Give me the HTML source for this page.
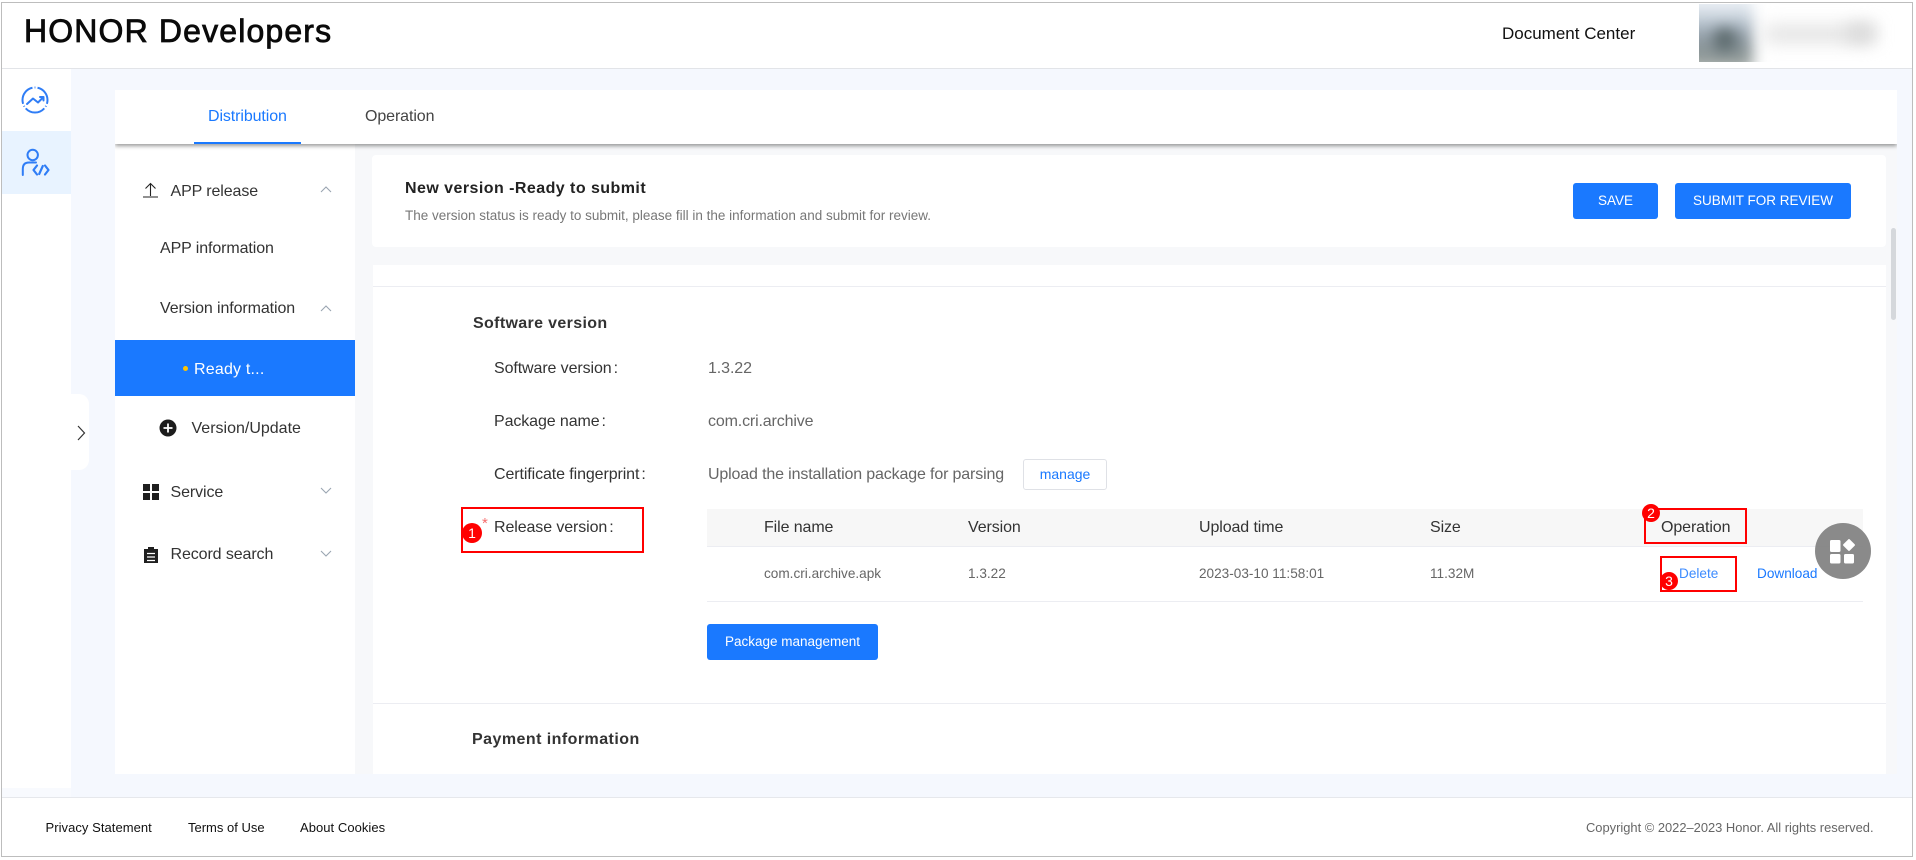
<!DOCTYPE html>
<html><head><meta charset="utf-8"><style>
html,body{margin:0;padding:0;width:1916px;height:860px;overflow:hidden;background:#fff}
body{position:relative;font-family:"Liberation Sans",sans-serif;color:#333;font-size:16px}
.a{position:absolute}
.t{position:absolute;line-height:20px;height:20px;white-space:nowrap;letter-spacing:-.1px}
.s{font-size:13.6px;letter-spacing:0}
.b{font-weight:700}
.rb{position:absolute;border:2px solid #f00;box-sizing:border-box}
.n{position:absolute;background:#f00;color:#fff;border-radius:50%;text-align:center;font-size:14px;box-sizing:border-box}
.btn{position:absolute;background:#1a79ff;color:#fff;border-radius:3px;text-align:center;font-size:13.5px}
</style></head><body>
<!-- backgrounds -->
<div class="a" style="left:71px;top:68px;width:1841px;height:729px;background:#f5f8fe"></div>
<div class="a" style="left:1px;top:788px;width:70px;height:9px;background:#f8fafe"></div>
<div class="a" style="left:1px;top:131px;width:70px;height:63px;background:#e8f3ff"></div>
<div class="a" style="left:115px;top:144px;width:1782px;height:630px;background:#f7f8fa"></div>
<div class="a" style="left:115px;top:144px;width:240px;height:630px;background:#fff"></div>
<div class="a" style="left:115px;top:90px;width:1782px;height:54px;background:#fff;box-shadow:0 2px 4px rgba(0,0,0,.4);clip-path:inset(0 0 -10px 0)"></div>
<div class="a" style="left:194px;top:142px;width:107px;height:2px;background:#1a79ff"></div>
<div class="a" style="left:372px;top:155px;width:1514px;height:92px;background:#fff;border-radius:4px"></div>
<div class="a" style="left:373px;top:265px;width:1513px;height:509px;background:#fff"></div>
<div class="a" style="left:373px;top:286px;width:1513px;height:1px;background:#ecedf2"></div>
<div class="a" style="left:373px;top:703px;width:1513px;height:1px;background:#ecedf2"></div>
<div class="a" style="left:1891px;top:228px;width:5px;height:92px;background:#d5d8dc;border-radius:3px"></div>
<div class="a" style="left:71px;top:394px;width:18px;height:76px;background:#fff;border-radius:0 10px 10px 0"></div>
<div class="a" style="left:115px;top:340px;width:240px;height:56px;background:#1a79ff"></div>
<!-- header -->
<div class="a" style="left:1px;top:68px;width:1911px;height:1px;background:#e2e4e8"></div>
<div class="t" style="left:24px;top:13px;font-size:32px;line-height:36px;height:36px;letter-spacing:1.15px;color:#0a0a0a;-webkit-text-stroke:.8px #0a0a0a">HONOR Developers</div>
<div class="t" style="left:1502px;top:24px;font-size:17px;letter-spacing:0;color:#111">Document Center</div>
<div class="a" style="left:1699px;top:4px;width:200px;height:58px;overflow:hidden;background:#fff">
<div class="a" style="left:-18px;top:-10px;width:72px;height:80px;background:linear-gradient(#f2f5f9 0%,#e2e9f0 18%,#b4c0cb 38%,#8f9ba4 55%,#8a9493 78%,#c9ccc8 100%);filter:blur(7px)"></div>
<div class="a" style="left:14px;top:24px;width:24px;height:24px;border-radius:50%;background:#5d6b6e;filter:blur(7px)"></div>
<div class="a" style="left:66px;top:22px;width:108px;height:16px;background:#e0e0e0;filter:blur(9px)"></div>
<div class="a" style="left:148px;top:20px;width:28px;height:18px;background:#dadada;filter:blur(8px)"></div>
</div>
<!-- tabs -->
<div class="t" style="left:208px;top:107px;color:#1a79ff">Distribution</div>
<div class="t" style="left:365px;top:107px;color:#444">Operation</div>
<!-- menu -->
<div class="t" style="left:170.5px;top:181.5px">APP release</div>
<div class="t" style="left:160px;top:239px">APP information</div>
<div class="t" style="left:160px;top:299px">Version information</div>
<div class="a" style="left:182.500px;top:365.500px;width:5px;height:5px;border-radius:50%;background:#ffc400"></div>
<div class="t" style="left:194px;top:360px;color:#fff;letter-spacing:.2px">Ready t...</div>
<div class="t" style="left:191.5px;top:419px;letter-spacing:0">Version/Update</div>
<div class="t" style="left:170.5px;top:483px">Service</div>
<div class="t" style="left:170.5px;top:545px">Record search</div>
<!-- head card -->
<div class="t b" style="left:405px;top:179px;color:#222;letter-spacing:.45px">New version -Ready to submit</div>
<div class="t" style="left:405px;top:206px;font-size:13.5px;letter-spacing:0;color:#777">The version status is ready to submit, please fill in the information and submit for review.</div>
<div class="btn" style="left:1573px;top:183px;width:85px;height:36px;line-height:36px">SAVE</div>
<div class="btn" style="left:1675px;top:183px;width:176px;height:36px;line-height:36px">SUBMIT FOR REVIEW</div>
<!-- form -->
<div class="t b" style="left:473px;top:314px;letter-spacing:.35px">Software version</div>
<div class="t" style="left:494px;top:358.500px">Software version<span style="margin-left:2px">:</span></div>
<div class="t" style="left:494px;top:411.500px">Package name<span style="margin-left:2px">:</span></div>
<div class="t" style="left:494px;top:464.500px">Certificate fingerprint<span style="margin-left:2px">:</span></div>
<div class="t" style="left:482px;top:517px;font-size:15px;color:#f56c6c;line-height:14px">*</div>
<div class="t" style="left:494px;top:518px">Release version<span style="margin-left:2px">:</span></div>
<div class="t" style="left:708px;top:358.500px;color:#666">1.3.22</div>
<div class="t" style="left:708px;top:411.500px;color:#666;letter-spacing:-.15px">com.cri.archive</div>
<div class="t" style="left:708px;top:464.500px;color:#666;letter-spacing:-.15px">Upload the installation package for parsing</div>
<div class="a" style="left:1023px;top:459px;width:84px;height:31px;border:1px solid #dfe1e6;border-radius:3px;box-sizing:border-box;text-align:center;line-height:29px;font-size:14px;color:#1a79ff">manage</div>
<!-- table -->
<div class="a" style="left:707px;top:509px;width:1156px;height:37px;background:#f7f7f7"></div>
<div class="a" style="left:707px;top:546px;width:1156px;height:1px;background:#ecedf2"></div>
<div class="a" style="left:707px;top:601px;width:1156px;height:1px;background:#ecedf2"></div>
<div class="t" style="left:764px;top:518px">File name</div>
<div class="t" style="left:968px;top:518px">Version</div>
<div class="t" style="left:1199px;top:518px">Upload time</div>
<div class="t" style="left:1430px;top:518px">Size</div>
<div class="t" style="left:1661px;top:518px">Operation</div>
<div class="t s" style="left:764px;top:564px;color:#666">com.cri.archive.apk</div>
<div class="t s" style="left:968px;top:564px;color:#666">1.3.22</div>
<div class="t s" style="left:1199px;top:564px;color:#666">2023-03-10 11:58:01</div>
<div class="t s" style="left:1430px;top:564px;color:#666">11.32M</div>
<div class="t s" style="left:1679px;top:564px;color:#3c8bff">Delete</div>
<div class="t s" style="left:1757px;top:564px;color:#1a79ff">Download</div>
<div class="btn" style="left:707px;top:624px;width:171px;height:36px;line-height:36px">Package management</div>
<div class="t b" style="left:472px;top:730px;letter-spacing:.45px">Payment information</div>
<!-- footer -->
<div class="a" style="left:1px;top:797px;width:1911px;height:1px;background:#e6e8ec"></div>
<div class="t" style="left:45.5px;top:818px;font-size:13px;color:#111;letter-spacing:.05px">Privacy Statement</div>
<div class="t" style="left:188px;top:818px;font-size:13px;color:#111;letter-spacing:0">Terms of Use</div>
<div class="t" style="left:300px;top:818px;font-size:13px;color:#111;letter-spacing:.05px">About Cookies</div>
<div class="t" style="left:1586px;top:818px;font-size:12.9px;color:#666;letter-spacing:0">Copyright © 2022–2023 Honor. All rights reserved.</div>
<!-- icons -->
<svg class="a" style="left:0;top:0" width="1916" height="860" viewBox="0 0 1916 860" fill="none">
<g stroke="#2f7df6" stroke-width="2" stroke-linejoin="round">
<circle cx="35" cy="100" r="12.500" pathLength="360" stroke-dasharray="4 10 96 10" stroke-dashoffset="2" transform="rotate(-90 35 100)"/>
<path d="M27 104 L33 98.500 L38 102.500 L43 97.500" stroke-linecap="round"/><path d="M40 97 H43.500 V100.500" stroke-linecap="round"/>
<circle cx="32.700" cy="155" r="5.200"/>
<path d="M22.800 175 V169 Q22.800 162.500 29 162.500 H36" stroke-linecap="round"/>
<path d="M37 165.500 L33.500 170 L37 174.500 M45 165.500 L48.500 170 L45 174.500 M42.800 166 L39.200 174" stroke-width="2.200" stroke-linecap="round"/>
</g>
<g stroke="#222" stroke-width="1.100" fill="none">
<path d="M150.500 196 V184 M145.500 188.500 L150.500 183.500 L155.500 188.500 M143 197 H158"/>
</g>
<g stroke="#9aa5b1" stroke-width="1.100" fill="none">
<path d="M321 192 L326 187 L331 192"/>
<path d="M321 311 L326 306 L331 311"/>
<path d="M321 488 L326 493 L331 488"/>
<path d="M321 551 L326 556 L331 551"/>
</g>
<circle cx="168" cy="428" r="8.500" fill="#1c1c1c"/>
<path d="M168 423.500 V432.500 M163.500 428 H172.500" stroke="#fff" stroke-width="1.800"/>
<g fill="#1f1f1f">
<rect x="143" y="484" width="7" height="7"/><rect x="152" y="484" width="7" height="7"/>
<rect x="143" y="493" width="7" height="7"/><rect x="152" y="493" width="7" height="7"/>
<path d="M144 549 H148 V547 H154 V549 H158 V563 H144 Z"/>
</g>
<path d="M147 553.500 H155 M147 557 H155 M147 560.500 H155" stroke="#fff" stroke-width="1.300"/>
<path d="M78 426 L84.500 433 L78 440" stroke="#333" stroke-width="1.200"/>
</svg>
<!-- annotations -->
<div class="rb" style="left:461px;top:507px;width:183px;height:46px"></div>
<div class="rb" style="left:1644px;top:508px;width:103px;height:36px"></div>
<div class="rb" style="left:1660px;top:556px;width:77px;height:36px"></div>
<div class="n" style="left:462px;top:523px;width:20px;height:20px;line-height:20px">1</div>
<div class="n" style="left:1642px;top:504px;width:18px;height:18px;line-height:18px">2</div>
<div class="n" style="left:1660px;top:572px;width:18px;height:18px;line-height:18px">3</div>
<!-- float button -->
<div class="a" style="left:1815px;top:523px;width:56px;height:56px;border-radius:50%;background:rgba(128,128,128,.92)"></div>
<svg class="a" style="left:1815px;top:523px" width="56" height="56" viewBox="0 0 56 56" fill="#fff">
<rect x="15" y="17" width="10.500" height="12" rx="1.500"/>
<rect x="15" y="31" width="10.500" height="9.500" rx="1.500"/>
<rect x="29" y="31" width="10" height="9.500" rx="1.500"/>
<rect x="29.500" y="17.500" width="9" height="9" rx="1" transform="rotate(45 34 22)"/>
</svg>
<!-- outer frame -->
<div class="a" style="left:1px;top:2px;width:1912px;height:855px;border:1px solid #bdbdbd;box-sizing:border-box;pointer-events:none"></div>
</body></html>
